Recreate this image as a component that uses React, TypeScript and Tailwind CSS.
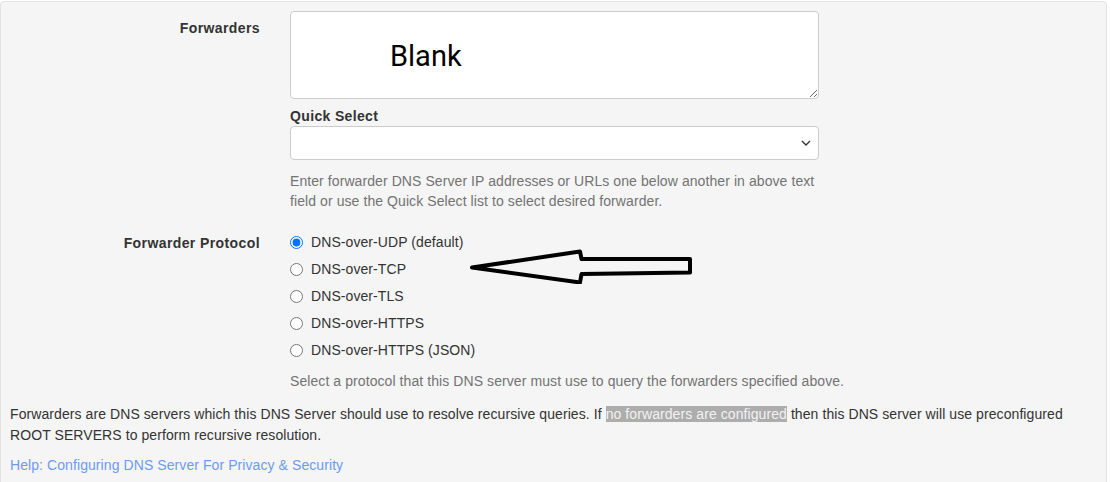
const protocols = [
  "DNS-over-UDP (default)",
  "DNS-over-TCP",
  "DNS-over-TLS",
  "DNS-over-HTTPS",
  "DNS-over-HTTPS (JSON)",
];

function Arrow() {
  return (
    <svg
      className="pointer-events-none absolute left-[180px] top-[-20px]"
      width="230"
      height="45"
      viewBox="0 0 230 45"
    >
      <polygon
        points="2,28.5 110,12.5 111.5,20 220,20 220,33.5 111.5,35 110,43.5"
        fill="none"
        stroke="#000"
        strokeWidth="4"
        strokeLinejoin="round"
      />
    </svg>
  );
}

export default function App() {
  return (
    <div className="min-h-[482px] bg-white pt-px font-['Liberation_Sans',Arial,sans-serif] text-[14px] leading-[20px] tracking-[0.08px] text-[#333]">
      <div className="w-[1107px] rounded-[4px] border border-[#e3e3e3] bg-[#f5f5f5] pb-[20px] pl-[9px] pr-[20px] pt-[9px]">
        <div className="flex">
          <label className="w-[265px] shrink-0 pr-[15px] pt-[7px] text-right font-bold tracking-[0.4px]">
            Forwarders
          </label>
          <div className="w-[544px] pl-[15px]">
            <div className="relative">
              <textarea className="block h-[88px] w-full resize-y rounded-[4px] border border-[#ccc] bg-white px-3 py-1.5 outline-none" />
              <span className="pointer-events-none absolute left-[100px] top-[27px] font-['Roboto',sans-serif] text-[29px] leading-[36px] tracking-normal text-black">
                Blank
              </span>
            </div>
            <div className="mt-[7px] font-bold tracking-[0.35px]">Quick Select</div>
            <div className="flex h-[34px] items-center justify-end rounded-[4px] border border-[#ccc] bg-white pr-[7px]">
              <svg width="10" height="6" viewBox="0 0 10 6">
                <path d="M1 1l4 4 4-4" fill="none" stroke="#333" strokeWidth="1.4" />
              </svg>
            </div>
            <p className="mb-[15px] mt-[11px] text-[#737373]">
              Enter forwarder DNS Server IP addresses or URLs one below another in above text field or use the Quick Select list to select desired forwarder.
            </p>
          </div>
        </div>

        <div className="flex">
          <label className="w-[265px] shrink-0 pr-[15px] pt-[7px] text-right font-bold tracking-[0.4px]">
            Forwarder Protocol
          </label>
          <div className="w-[544px] pl-[15px] pt-[6px]">
            <div className="flex flex-col gap-[7px]">
              {protocols.map((p, i) => (
                <label key={p} className="relative flex h-[20px] items-center gap-[8px]">
                  <input
                    type="radio"
                    name="proto"
                    defaultChecked={i === 0}
                    className="m-0 h-[13px] w-[13px] accent-[#0075ff]"
                  />
                  <span>{p}</span>
                  {i === 1 && <Arrow />}
                </label>
              ))}
            </div>
            <p className="mt-[11px] whitespace-nowrap text-[#737373]">
              Select a protocol that this DNS server must use to query the forwarders specified above.
            </p>
          </div>
        </div>

        <p className="mt-[13px] leading-[21px]">
          Forwarders are DNS servers which this DNS Server should use to resolve recursive queries. If{" "}
          <span className="bg-[#adadad] text-[#f2f2f2]">no forwarders are configured</span> then this DNS server will use preconfigured ROOT SERVERS to perform recursive resolution.
        </p>
        <a href="#" className="mt-[9px] block text-[#6c9bf5]">
          Help: Configuring DNS Server For Privacy &amp; Security
        </a>
      </div>
    </div>
  );
}
